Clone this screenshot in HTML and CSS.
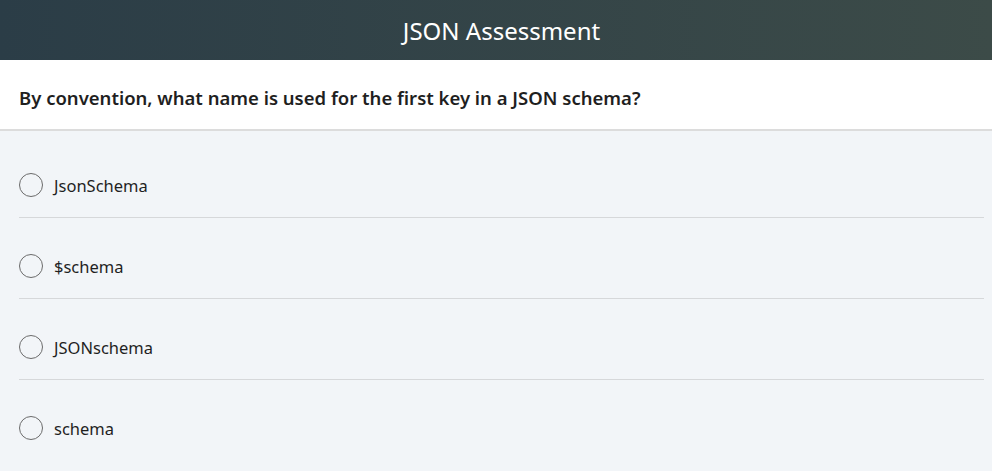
FILE: index.html
```html
<!DOCTYPE html>
<html lang="en">

<head>
    <meta charset="UTF-8">
    <meta name="viewport" content="width=device-width, initial-scale=1.0">
    <title>JSON Assessment</title>
    <link rel="stylesheet" href="styles.css">
</head>

<body>
    <header class="top-bar">
        <h1>JSON Assessment</h1>
    </header>
    <div class="question">
        <h2>By convention, what name is used for the first key in a JSON schema?</h2>
    </div>
    <ul class="answers">
        <li><label><span class="radio"></span>JsonSchema</label></li>
        <li><label><span class="radio"></span>$schema</label></li>
        <li><label><span class="radio"></span>JSONschema</label></li>
        <li><label><span class="radio"></span>schema</label></li>
    </ul>
</body>

</html>
```

FILE: styles.css
```css
:root {
    --header-left: #2b3d47;
    --header-right: #3c4b48;
    --text-color: #1f1f1f;
    --answers-bg: #f2f5f8;
    --divider: #d6d8da;
    --font-family: "Segoe UI", "Noto Sans", "Open Sans", sans-serif;
}

* {
    margin: 0;
    padding: 0;
    box-sizing: border-box;
}

body {
    font-family: var(--font-family);
    color: var(--text-color);
    background: var(--answers-bg);
}

.top-bar {
    height: 60px;
    display: flex;
    align-items: center;
    justify-content: center;
    padding-left: 11px;
    background: linear-gradient(90deg, var(--header-left), var(--header-right));
}

.top-bar h1 {
    color: #fff;
    font-size: 24px;
    font-weight: 400;
}

.question {
    background: #fff;
    height: 71px;
    padding: 5px 19px 0;
    display: flex;
    align-items: center;
    border-bottom: 2px solid #dcdcdc;
}

.question h2 {
    font-size: 18.5px;
    font-weight: 600;
}

.answers {
    list-style: none;
    padding: 6px 8px 0 19px;
}

.answers li {
    padding: 36px 0 20px;
    border-bottom: 1px solid var(--divider);
}

.answers li:last-child {
    border-bottom: none;
}

.answers label {
    display: flex;
    align-items: center;
    font-size: 16.5px;
    cursor: pointer;
}

.radio {
    width: 24px;
    height: 24px;
    border-radius: 50%;
    border: 1.5px solid #6b6b6b;
    margin-right: 11px;
    background: transparent;
}
```
